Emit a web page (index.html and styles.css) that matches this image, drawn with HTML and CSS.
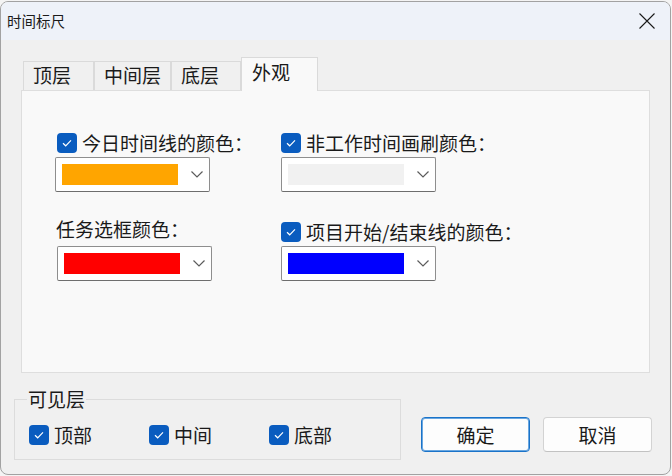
FILE: index.html
```html
<!DOCTYPE html>
<html lang="zh-CN">
<head>
<meta charset="utf-8">
<title>时间标尺</title>
<link rel="stylesheet" href="styles.css">
</head>
<body>
<div class="window">
  <div class="titlebar">
    <span class="title">时间标尺</span>
    <svg class="close" width="16" height="16" viewBox="0 0 16 16"><path d="M0.5 0.5 L15.5 15.5 M15.5 0.5 L0.5 15.5" stroke="#1a1a1a" stroke-width="1.1" fill="none"/></svg>
  </div>
  <div class="content">
    <div class="tabs">
      <div class="tab t1">顶层</div>
      <div class="tab t2">中间层</div>
      <div class="tab t3">底层</div>
      <div class="tab active">外观</div>
    </div>
    <div class="panel">
      <div class="grid">
        <div class="field">
          <div class="head">
            <span class="cb"><svg width="20" height="20" viewBox="0 0 20 20"><path d="M6 10.2 L8.7 12.8 L14 7.4" stroke="#fff" stroke-width="1.2" fill="none"/></svg></span>
            <span class="lbl">今日时间线的颜色：</span>
          </div>
          <div class="combo">
            <span class="swatch" style="background:#ffa500"></span>
            <svg class="chev" width="12" height="7" viewBox="0 0 12 7"><path d="M0.5 0.5 L6 6 L11.5 0.5" stroke="#5c5c5c" stroke-width="1.2" fill="none"/></svg>
          </div>
        </div>
        <div class="field col2">
          <div class="head">
            <span class="cb"><svg width="20" height="20" viewBox="0 0 20 20"><path d="M6 10.2 L8.7 12.8 L14 7.4" stroke="#fff" stroke-width="1.2" fill="none"/></svg></span>
            <span class="lbl">非工作时间画刷颜色：</span>
          </div>
          <div class="combo">
            <span class="swatch" style="background:#f1f1f1"></span>
            <svg class="chev" width="12" height="7" viewBox="0 0 12 7"><path d="M0.5 0.5 L6 6 L11.5 0.5" stroke="#5c5c5c" stroke-width="1.2" fill="none"/></svg>
          </div>
        </div>
        <div class="field">
          <div class="head plain">
            <span class="lbl">任务选框颜色：</span>
          </div>
          <div class="combo shifted">
            <span class="swatch" style="background:#ff0000"></span>
            <svg class="chev" width="12" height="7" viewBox="0 0 12 7"><path d="M0.5 0.5 L6 6 L11.5 0.5" stroke="#5c5c5c" stroke-width="1.2" fill="none"/></svg>
          </div>
        </div>
        <div class="field col2">
          <div class="head">
            <span class="cb"><svg width="20" height="20" viewBox="0 0 20 20"><path d="M6 10.2 L8.7 12.8 L14 7.4" stroke="#fff" stroke-width="1.2" fill="none"/></svg></span>
            <span class="lbl">项目开始/结束线的颜色：</span>
          </div>
          <div class="combo">
            <span class="swatch" style="background:#0000ff"></span>
            <svg class="chev" width="12" height="7" viewBox="0 0 12 7"><path d="M0.5 0.5 L6 6 L11.5 0.5" stroke="#5c5c5c" stroke-width="1.2" fill="none"/></svg>
          </div>
        </div>
      </div>
    </div>
    <div class="bottom">
      <fieldset class="group">
        <legend>可见层</legend>
        <div class="checks">
          <div class="item"><span class="cb"><svg width="20" height="20" viewBox="0 0 20 20"><path d="M6 10.2 L8.7 12.8 L14 7.4" stroke="#fff" stroke-width="1.2" fill="none"/></svg></span><span class="lbl">顶部</span></div>
          <div class="item"><span class="cb"><svg width="20" height="20" viewBox="0 0 20 20"><path d="M6 10.2 L8.7 12.8 L14 7.4" stroke="#fff" stroke-width="1.2" fill="none"/></svg></span><span class="lbl">中间</span></div>
          <div class="item"><span class="cb"><svg width="20" height="20" viewBox="0 0 20 20"><path d="M6 10.2 L8.7 12.8 L14 7.4" stroke="#fff" stroke-width="1.2" fill="none"/></svg></span><span class="lbl">底部</span></div>
        </div>
      </fieldset>
      <div class="buttons">
        <button class="btn primary">确定</button>
        <button class="btn">取消</button>
      </div>
    </div>
  </div>
</div>
</body>
</html>
```
FILE: styles.css
```css
* { box-sizing: border-box; }
html, body { margin: 0; padding: 0; }
body {
  background: #f4f4f4;
  padding-top: 1px;
  font-family: "Noto Sans CJK SC", "Microsoft YaHei", sans-serif;
  color: #1a1a1a;
}
.window {
  width: 671px;
  height: 474px;
  border: 1px solid #a2a2a2;
  border-radius: 8px;
  overflow: hidden;
  background: #f0f0f0;
  display: flex;
  flex-direction: column;
}
.titlebar {
  height: 38px;
  background: #eef2f9;
  display: flex;
  align-items: center;
  justify-content: space-between;
  padding-left: 6px;
  flex: none;
}
.title {
  font-size: 14.5px;
  line-height: 16px;
}
.close { margin-right: 15px; }
.content {
  flex: 1;
  display: flex;
  flex-direction: column;
  padding-top: 17px;
}
.tabs {
  display: flex;
  align-items: flex-end;
  height: 33px;
  margin-left: 22px;
}
.tab {
  height: 29px;
  border: 1px solid #dadada;
  border-bottom: none;
  background: #f0f0f0;
  font-size: 19px;
  line-height: 26px;
  padding-left: 9px;
}
.t1 { width: 71px; }
.t2 { width: 77px; }
.t3 { width: 70px; }
.tab.active {
  width: 77px;
  height: 34px;
  margin-bottom: -1px;
  background: #f9f9f9;
  position: relative;
  z-index: 1;
  line-height: 28px;
  padding-left: 10px;
}
.panel {
  margin-left: 20px;
  width: 629px;
  height: 283px;
  border: 1px solid #dedede;
  background: #f9f9f9;
  padding: 42px 0 0 33px;
}
.grid {
  display: grid;
  grid-template-columns: 226px 226px;
  row-gap: 30px;
}
.field {
  display: flex;
  flex-direction: column;
  gap: 4px;
}
.head {
  height: 20px;
  display: flex;
  align-items: center;
  gap: 5px;
  font-size: 19px;
}
.field:not(.col2) .head .cb { margin-left: 2px; }
.head.plain { padding-bottom: 6px; padding-left: 1px; }
.cb {
  width: 20px;
  height: 20px;
  border-radius: 4px;
  background: #0a5cbf;
  display: inline-flex;
  flex: none;
}
.lbl { white-space: nowrap; line-height: 20px; }
.combo {
  width: 155px;
  height: 35px;
  background: #ffffff;
  border: 1px solid #8e8e8e;
  border-bottom-color: #6e6e6e;
  border-radius: 2px;
  display: flex;
  align-items: center;
  padding-left: 6px;
}
.combo.shifted { margin-left: 2px; }
.swatch {
  width: 116px;
  height: 21px;
  display: block;
}
.chev { margin-left: 13px; }
.bottom {
  display: flex;
  margin-top: 16px;
  margin-left: 13px;
}
.group {
  margin: 0;
  padding: 0;
  width: 387px;
  height: 71px;
  border: 1px solid #dcdcdc;
  min-inline-size: 0;
}
.group legend {
  margin-left: 12px;
  padding: 0 1px;
  font-size: 19px;
  line-height: 20px;
}
.checks {
  display: flex;
  padding: 16px 0 0 14px;
}
.item {
  width: 120px;
  display: flex;
  align-items: center;
  gap: 5px;
  font-size: 19px;
  height: 20px;
}
.buttons {
  display: flex;
  gap: 13px;
  margin-left: 20px;
  margin-top: 28px;
}
.btn {
  width: 109px;
  height: 35px;
  border: 1px solid #d3d3d3;
  border-bottom-color: #c2c2c2;
  border-radius: 4px;
  background: #fdfdfd;
  font-family: "Noto Sans CJK SC", "Microsoft YaHei", sans-serif;
  font-size: 19px;
  color: #1a1a1a;
  padding: 0;
  line-height: 33px;
}
.btn.primary {
  border: 1px solid #1a73c9;
  box-shadow: inset 0 0 0 1px #6aa7e0;
}
```
